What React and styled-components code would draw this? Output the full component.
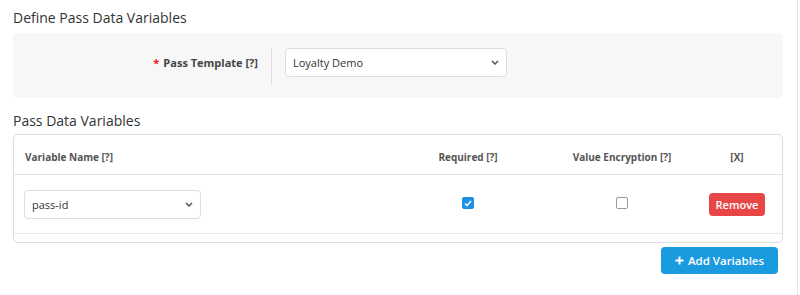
import styled, { createGlobalStyle } from "styled-components"

const GlobalStyle = createGlobalStyle`
  html, body {
    margin: 0;
    padding: 0;
    background: #ffffff;
    font-family: "Open Sans", "Liberation Sans", sans-serif;
    color: #333333;
  }
`

const Page = styled.div`
  width: 798px;
  height: 295px;
  border-right: 1px solid #e4e4e4;
  box-sizing: border-box;
  padding: 8px 14px 0 13px;
  display: flex;
  flex-direction: column;
`

const SectionTitle = styled.h3`
  margin: 0;
  font-size: 14px;
  font-weight: 400;
  line-height: 20px;
  color: #333333;
  margin-bottom: ${(p) => p.$gap || 5}px;
`

const Panel = styled.div`
  background: #f7f7f7;
  border-radius: 4px;
  padding: 15px 0 14px 0;
  display: flex;
  align-items: flex-start;
  margin-bottom: 13px;
`

const FieldLabel = styled.div`
  width: 259px;
  box-sizing: border-box;
  height: 36px;
  padding: 7px 13px 0 0;
  border-right: 1px solid #dddddd;
  text-align: right;
  font-size: 11px;
  font-weight: 700;
  color: #444444;
`

const Star = styled.span`
  color: #e02020;
  margin-right: 4px;
`

const SelectWrap = styled.div`
  position: relative;
  width: ${(p) => p.$w}px;
  margin-left: ${(p) => p.$ml || 0}px;
  height: 29px;
`

const Select = styled.select`
  appearance: none;
  width: 100%;
  height: 100%;
  box-sizing: border-box;
  border: 1px solid #dddddd;
  border-radius: 4px;
  background: #ffffff;
  padding: 0 24px 0 7px;
  font-family: "Open Sans", "Liberation Sans", sans-serif;
  font-size: 11px;
  color: #333333;
  outline: none;
`

const Chevron = styled.svg`
  position: absolute;
  right: 8px;
  top: 12px;
  pointer-events: none;
`

const Card = styled.div`
  border: 1px solid #dcdcdc;
  border-radius: 5px;
  padding-bottom: 8px;
  margin-bottom: 4px;
`

const Row = styled.div`
  display: grid;
  grid-template-columns: 370px 168px 140px 1fr;
  align-items: center;
  height: ${(p) => p.$h}px;
  box-sizing: border-box;
  border-bottom: 1px solid ${(p) => p.$line};
`

const HeadCell = styled.div`
  font-size: 10px;
  font-weight: 700;
  color: #555555;
  text-align: ${(p) => (p.$left ? "left" : "center")};
  padding-left: ${(p) => (p.$left ? 11 : 0)}px;
  padding-top: 4px;
`

const Cell = styled.div`
  display: flex;
  justify-content: ${(p) => (p.$left ? "flex-start" : "center")};
  padding-left: ${(p) => (p.$left ? 10 : 0)}px;
`

const Check = styled.span`
  width: 12px;
  height: 12px;
  box-sizing: border-box;
  border-radius: 2px;
  display: flex;
  align-items: center;
  justify-content: center;
  background: ${(p) => (p.$on ? "#1e90e6" : "#ffffff")};
  border: 1px solid ${(p) => (p.$on ? "#1e90e6" : "#9a9a9a")};
  margin-top: ${(p) => p.$mt || 0}px;
`

const RemoveButton = styled.button`
  width: 56px;
  height: 23px;
  border: none;
  border-radius: 4px;
  background: #e84646;
  color: #ffffff;
  font-family: "Open Sans", "Liberation Sans", sans-serif;
  font-size: 11px;
  font-weight: 600;
  padding: 0;
  cursor: pointer;
`

const Actions = styled.div`
  display: flex;
  justify-content: flex-end;
  padding-right: 5px;
`

const AddButton = styled.button`
  width: 117px;
  height: 27px;
  border: none;
  border-radius: 4px;
  background: #1a9be0;
  color: #ffffff;
  font-family: "Open Sans", "Liberation Sans", sans-serif;
  font-size: 11.5px;
  font-weight: 600;
  display: flex;
  align-items: center;
  justify-content: center;
  gap: 4px;
  padding: 0;
  cursor: pointer;
`

const Arrow = () => (
  <Chevron width="8" height="5" viewBox="0 0 8 5">
    <path d="M1 1l3 3 3-3" fill="none" stroke="#555" strokeWidth="1.5" />
  </Chevron>
)

export default function App() {
  return (
    <>
      <GlobalStyle />
      <Page>
        <SectionTitle $gap={5}>Define Pass Data Variables</SectionTitle>
        <Panel>
          <FieldLabel>
            <Star>*</Star>Pass Template [?]
          </FieldLabel>
          <SelectWrap $w={222} $ml={13}>
            <Select defaultValue="loyalty">
              <option value="loyalty">Loyalty Demo</option>
            </Select>
            <Arrow />
          </SelectWrap>
        </Panel>

        <SectionTitle $gap={3}>Pass Data Variables</SectionTitle>
        <Card>
          <Row $h={40} $line="#e3e3e3">
            <HeadCell $left>Variable Name [?]</HeadCell>
            <HeadCell>Required [?]</HeadCell>
            <HeadCell>Value Encryption [?]</HeadCell>
            <HeadCell>[X]</HeadCell>
          </Row>
          <Row $h={59} $line="#e6e6ef">
            <Cell $left>
              <SelectWrap $w={177}>
                <Select defaultValue="pass-id">
                  <option value="pass-id">pass-id</option>
                </Select>
                <Arrow />
              </SelectWrap>
            </Cell>
            <Cell>
              <Check $on $mt={-2}>
                <svg width="8" height="7" viewBox="0 0 8 7">
                  <path d="M1 3.6l2 2L7 1" fill="none" stroke="#fff" strokeWidth="1.4" />
                </svg>
              </Check>
            </Cell>
            <Cell>
              <Check $mt={-2} />
            </Cell>
            <Cell>
              <RemoveButton>Remove</RemoveButton>
            </Cell>
          </Row>
        </Card>
        <Actions>
          <AddButton>
            <svg width="9" height="9" viewBox="0 0 10 10">
              <path d="M5 0.5v9M0.5 5h9" stroke="#fff" strokeWidth="2.2" />
            </svg>
            Add Variables
          </AddButton>
        </Actions>
      </Page>
    </>
  )
}
